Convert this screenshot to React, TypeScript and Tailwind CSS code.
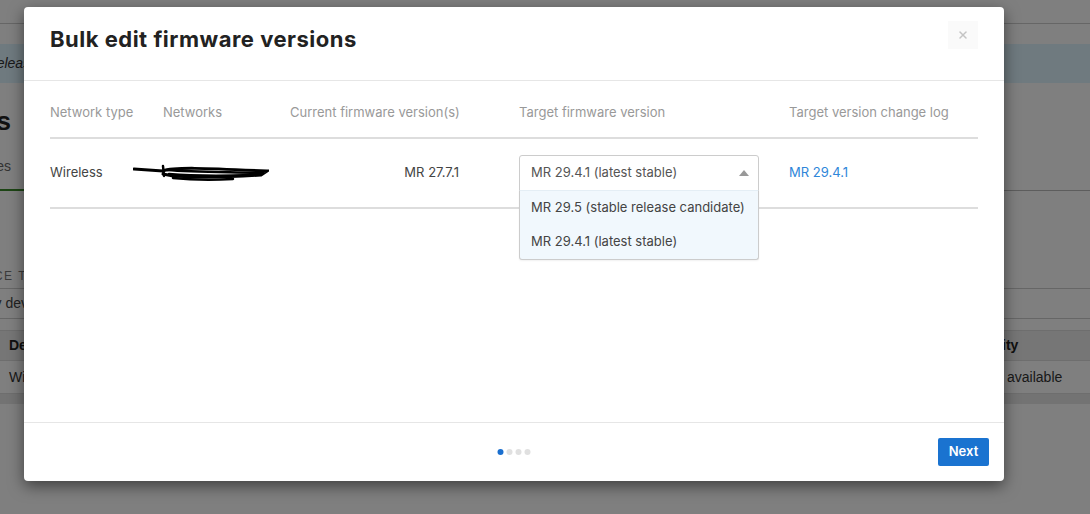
import React from 'react';
import { X } from 'lucide-react';

const headers = ['Network type', 'Networks', 'Current firmware version(s)', 'Target firmware version', 'Target version change log'];

const options = ['MR 29.5 (stable release candidate)', 'MR 29.4.1 (latest stable)'];

// the redacted network name, a hand scribble
const Scribble = () => (
    <svg width="136" height="22" viewBox="0 0 136 22" className="block">
        <path d="M1 7 L30 9 M30 9 C40 5 70 6 134 9 L128 13 C100 15 70 16 40 14 L30 12" stroke="#000" strokeWidth="3" fill="none" strokeLinecap="round" />
        <path d="M30 4 L31 14 M34 8 C60 10 100 10 130 11 M36 12 C60 14 90 14 120 13 M40 16 C60 18 80 18 100 17" stroke="#000" strokeWidth="2.5" fill="none" strokeLinecap="round" />
    </svg>
);

// text that runs off the left edge of the window, ending at `w`
const Clip = ({ w, children }: { w: string; children: React.ReactNode }) => (
    <div className={`flex justify-end whitespace-nowrap ${w}`}>{children}</div>
);

const BackgroundPage = () => (
    <div className="h-[514px] w-full overflow-hidden bg-white text-[#222]" style={{ fontFamily: '"Liberation Sans", Arial, sans-serif' }}>
        <div className="h-[24px] border-b border-[#ccc]" />
        <div className="h-[20px]" />
        <div className="h-[39px] bg-[#dff4ff] flex items-center text-[14px] italic text-[#333] -ml-[8px]">release notes</div>
        <div className="h-[53px] pt-[23px] text-[26px] font-bold leading-[30px]">
            <Clip w="w-[11px]">Firmware versions</Clip>
        </div>
        <div className="h-[55px] border-b border-[#bbb] flex items-end text-[14px] text-[#666]">
            <Clip w="w-[24px]">
                <span className="border-b-2 border-[#3b8a2a] pb-[12px] -mb-[1px] pr-[13px]">Updates</span>
            </Clip>
        </div>
        <div className="pt-[77px] leading-[16px] text-[12px] tracking-[1.5px] text-[#777] pb-[4px] border-b border-[#ccc]">
            <Clip w="w-[27px]">DEVICE T</Clip>
        </div>
        <div className="h-[30px] flex items-center text-[14px] text-[#444] border-b border-[#ccc]">
            <Clip w="w-[28px]">Filter by dev</Clip>
        </div>
        <div className="h-[11px]" />
        <div className="h-[31px] bg-[#ececec] flex items-center text-[14px] font-bold border-t border-b border-[#ddd]">
            <span className="pl-[9px] flex-1">Device type</span>
            <span className="w-[145px]">Availability</span>
        </div>
        <div className="h-[33px] flex items-center text-[14px] text-[#333] border-b border-[#ddd]">
            <span className="pl-[9px] flex-1">Wireless</span>
            <span className="w-[145px] pl-[13px]">Update available</span>
        </div>
        <div className="h-[10px] bg-[#e6e6e6]" />
    </div>
);

export default function App() {
    return (
        <div className="relative w-[1090px] h-[514px] overflow-hidden">
            <BackgroundPage />
            <div className="absolute inset-0 bg-black/50" />
            <div
                className="absolute left-[24px] top-[7px] w-[980px] h-[474px] bg-white rounded-[4px] shadow-[0_5px_15px_rgba(0,0,0,0.5)] flex flex-col"
                style={{ fontFamily: 'Inter, "Noto Sans", sans-serif' }}
            >
                <div className="h-[74px] border-b border-[#e6e6e6] flex items-start justify-between pl-[26px] pr-[26px] pt-[17px]">
                    <h2 className="text-[22px] font-bold leading-[30px] text-[#222] tracking-[0.5px]">Bulk edit firmware versions</h2>
                    <button className="w-[30px] h-[28px] -mt-[3px] bg-[#fafafa] flex items-center justify-center text-[#c4c4c4]">
                        <X size={12} strokeWidth={3} />
                    </button>
                </div>

                <div className="flex-1 px-[26px] pt-[22px]">
                    <div className="grid grid-cols-[113px_127px_169px_60px_270px_1fr] border-b-2 border-[#ddd] pb-[16px] text-[13px] leading-[18px] text-[#999] whitespace-nowrap">
                        <span>{headers[0]}</span>
                        <span>{headers[1]}</span>
                        <span>{headers[2]}</span>
                        <span />
                        <span>{headers[3]}</span>
                        <span>{headers[4]}</span>
                    </div>
                    <div className="grid grid-cols-[113px_127px_169px_60px_270px_1fr] items-center h-[70px] border-b-2 border-[#ddd] text-[13px] text-[#444]">
                        <span>Wireless</span>
                        <span className="-ml-[30px]"><Scribble /></span>
                        <span className="text-right">MR 27.7.1</span>
                        <span />
                        <div className="relative w-[240px]">
                            <div className="h-[36px] border border-[#ccc] rounded-t-[3px] flex items-center justify-between pl-[11px] pr-[9px] text-[#555]">
                                <span>MR 29.4.1 (latest stable)</span>
                                <span className="w-0 h-0 border-l-[5px] border-r-[5px] border-b-[6px] border-l-transparent border-r-transparent border-b-[#999]" />
                            </div>
                            <div className="absolute left-0 right-0 top-[35px] bg-[#f1f8fd] border border-[#ccc] border-t-[#e4eef5] rounded-b-[3px] shadow-[0_1px_2px_rgba(0,0,0,0.06)]">
                                {options.map((opt) => (
                                    <div key={opt} className="h-[34px] flex items-center pl-[11px] text-[#444]">{opt}</div>
                                ))}
                            </div>
                        </div>
                        <span className="text-[#2f86d9]">MR 29.4.1</span>
                    </div>
                </div>

                <div className="h-[59px] border-t border-[#e6e6e6] relative flex items-center justify-end pr-[15px]">
                    <div className="absolute left-1/2 top-1/2 -translate-x-1/2 -translate-y-1/2 flex gap-[3px]">
                        <span className="w-[6px] h-[6px] rounded-full bg-[#1a6fcf]" />
                        <span className="w-[6px] h-[6px] rounded-full bg-[#e0e0e0]" />
                        <span className="w-[6px] h-[6px] rounded-full bg-[#e0e0e0]" />
                        <span className="w-[6px] h-[6px] rounded-full bg-[#e0e0e0]" />
                    </div>
                    <button className="w-[51px] h-[28px] bg-[#1a73d0] text-white text-[13px] font-semibold rounded-[2px]">Next</button>
                </div>
            </div>
        </div>
    );
}
